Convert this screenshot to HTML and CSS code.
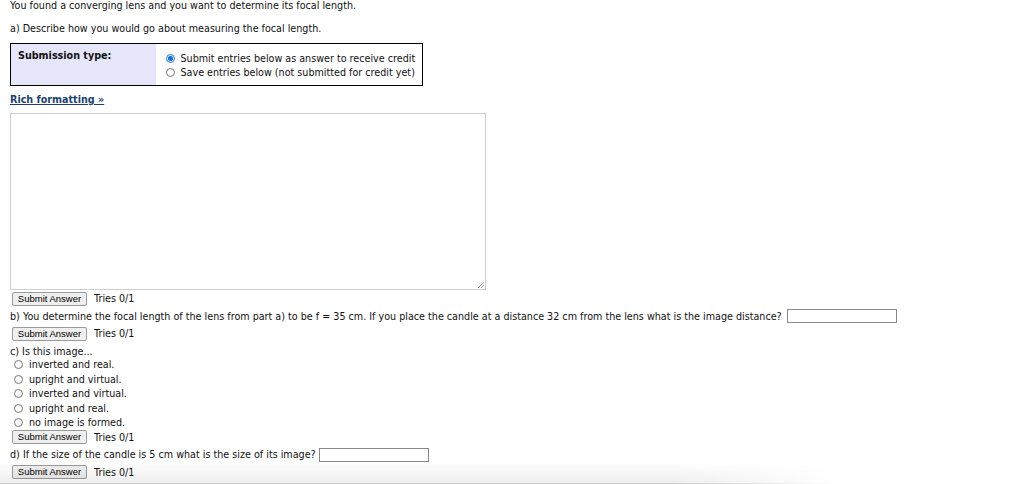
FILE: index.html
```html
<!DOCTYPE html>
<html>
<head>
<meta charset="utf-8">
<link rel="stylesheet" href="styles.css">
</head>
<body>
<div class="page">
  <p class="intro">You found a converging lens and you want to determine its focal length.</p>
  <p class="q qa">a) Describe how you would go about measuring the focal length.</p>
  <table class="subtype">
    <tr>
      <td class="label">Submission type:</td>
      <td class="opts">
        <label class="opt"><span class="radio checked"></span>Submit entries below as answer to receive credit</label>
        <label class="opt"><span class="radio"></span>Save entries below (not submitted for credit yet)</label>
      </td>
    </tr>
  </table>
  <a class="rich" href="#">Rich formatting »</a>
  <div class="textarea"><span class="grip"></span></div>
  <div class="submit-row"><span class="btn">Submit Answer</span><span class="tries">Tries 0/1</span></div>
  <div class="q-row">b) You determine the focal length of the lens from part a) to be f = 35 cm. If you place the candle at a distance 32 cm from the lens what is the image distance? <span class="input"></span></div>
  <div class="submit-row"><span class="btn">Submit Answer</span><span class="tries">Tries 0/1</span></div>
  <div class="q-row qc">c) Is this image...</div>
  <div class="choices">
    <label class="choice"><span class="radio"></span>inverted and real.</label>
    <label class="choice"><span class="radio"></span>upright and virtual.</label>
    <label class="choice"><span class="radio"></span>inverted and virtual.</label>
    <label class="choice"><span class="radio"></span>upright and real.</label>
    <label class="choice"><span class="radio"></span>no image is formed.</label>
  </div>
  <div class="submit-row after-choices"><span class="btn">Submit Answer</span><span class="tries">Tries 0/1</span></div>
  <div class="q-row">d) If the size of the candle is 5 cm what is the size of its image? <span class="input short"></span></div>
  <div class="submit-row"><span class="btn">Submit Answer</span><span class="tries">Tries 0/1</span></div>
  <div class="q-row qe">e) Which of the possible applications of the lens would be the most useful for a photographer?</div>
</div>
<div class="shade"></div>
</body>
</html>
```
FILE: styles.css
```css
html, body {
  margin: 0;
  padding: 0;
  background: #fff;
  overflow: hidden;
  height: 484px;
}
body {
  font-family: "DejaVu Sans", Verdana, sans-serif;
  font-size: 9.6px;
  color: #111;
}
.page {
  padding: 0 10px;
}
p { margin: 0; }
.intro {
  line-height: 12px;
}
.qa {
  line-height: 12px;
  margin-top: 11px;
}
.subtype {
  margin-top: 8px;
  border-collapse: collapse;
  border: 1px solid #000;
  width: 413px;
  height: 43px;
}
.subtype td {
  padding: 0;
  vertical-align: top;
}
.label {
  background: #e6e6fa;
  width: 145px;
  font-weight: bold;
  padding: 6px 0 0 7px !important;
  box-sizing: border-box;
}
.opts {
  padding: 7px 0 0 10px !important;
}
.opt {
  display: flex;
  align-items: center;
  height: 14px;
  white-space: nowrap;
}
.radio {
  display: inline-block;
  width: 9px;
  height: 9px;
  border: 1px solid #777;
  border-radius: 50%;
  box-sizing: border-box;
  background: #fff;
  margin-right: 6px;
  flex: none;
}
.radio.checked {
  border: 1px solid #1a73e8;
  background: radial-gradient(circle, #1a73e8 0 2.3px, #fff 2.6px);
}
.rich {
  display: inline-block;
  margin-top: 8px;
  font-weight: bold;
  color: #1c3f73;
  text-decoration: underline;
  line-height: 12px;
}
.textarea {
  position: relative;
  margin-top: 7px;
  width: 476px;
  height: 177px;
  border: 1px solid #cfcfcf;
  box-sizing: border-box;
}
.grip {
  position: absolute;
  right: 1px;
  bottom: 1px;
  width: 6px;
  height: 6px;
  background: linear-gradient(135deg, transparent 0 45%, #999 45% 52%, transparent 52% 70%, #999 70% 77%, transparent 77%);
}
.submit-row {
  display: flex;
  align-items: center;
  height: 17.5px;
}
.after-choices {
  margin-top: -1.5px;
}
.btn {
  font-family: "Liberation Sans", Arial, sans-serif;
  font-size: 9.5px;
  color: #000;
  background: #efefef;
  border: 1px solid #9a9a9a;
  border-radius: 2px;
  height: 14px;
  line-height: 12px;
  box-sizing: border-box;
  margin-left: 2px;
  width: 75px;
  text-align: center;
  white-space: nowrap;
}
.tries {
  margin-left: 7px;
}
.q-row {
  display: flex;
  align-items: center;
  height: 17.5px;
  white-space: nowrap;
}
.input {
  display: inline-block;
  width: 110px;
  height: 14px;
  border: 1px solid #888;
  box-sizing: border-box;
  margin-left: 5px;
}
.input.short {
  margin-left: 3px;
}
.qc {
  box-sizing: border-box;
  height: 15px;
  padding-top: 2px;
}
.choices {
  display: flex;
  flex-direction: column;
}
.choice {
  display: flex;
  align-items: center;
  height: 14.5px;
  padding-left: 4px;
}
.shade {
  position: absolute;
  left: 0;
  top: 462px;
  width: 840px;
  height: 22px;
  background: linear-gradient(to bottom, rgba(0,0,0,0), rgba(0,0,0,0.07));
  -webkit-mask-image: linear-gradient(to right, #000 0 80%, transparent 100%);
  pointer-events: none;
}
.shade::after {
  content: "";
  position: absolute;
  left: 0;
  bottom: 0;
  width: 830px;
  height: 1px;
  background: #ccc;
}
```
